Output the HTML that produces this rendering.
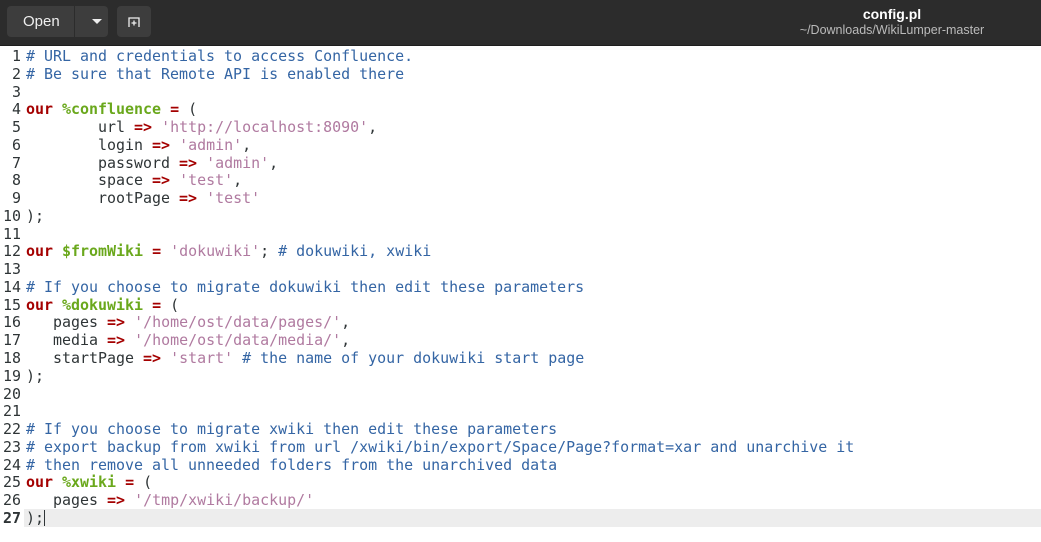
<!DOCTYPE html>
<html><head><meta charset="utf-8"><style>
body{margin:0;width:1041px;height:542px;overflow:hidden;background:#fff;font-family:"Liberation Sans",sans-serif}
.hdr{position:absolute;left:0;top:0;width:1041px;height:45px;background:#2c2c2c;border-bottom:1px solid #1e1e1e}
.btn{position:absolute;top:6px;height:31px;background:#3d3d3d;border-radius:4px;color:#eee;font-size:15px}
.title{position:absolute;left:767px;width:250px;text-align:center;color:#fff}
.ed{position:absolute;left:0;top:48px;font-family:"DejaVu Sans Mono",monospace;font-size:14.96px;line-height:17.77px;color:#2e3436}
.l{height:17.77px;white-space:pre;position:relative}
.n{display:inline-block;width:21px;text-align:right;margin-right:5px;color:#2e3436}
.c{color:#3465a4}.k{color:#a40000;font-weight:bold}.v{color:#6aa81c;font-weight:bold}.s{color:#b07aa0}
.cur{position:absolute;left:24px;top:509px;width:1017px;height:18px;background:#ededed}
</style></head><body>
<div class="hdr">
<div class="btn" style="left:7px;width:101px"><span style="position:absolute;left:16px;top:7px">Open</span><div style="position:absolute;left:67px;top:0;width:1px;height:31px;background:#2c2c2c"></div><div style="position:absolute;left:85px;top:13px;width:0;height:0;border-left:5px solid transparent;border-right:5px solid transparent;border-top:5px solid #eee"></div></div>
<div class="btn" style="left:117px;width:34px"><svg width="34" height="31"><path d="M12 21V12h10v9M14.5 17h5M17 14.5v5" stroke="#eee" stroke-width="1.3" fill="none"/></svg></div>
<div class="title" style="top:6px;font-weight:bold;font-size:14px">config.pl</div>
<div class="title" style="top:23px;font-size:12.5px;color:#bbb">~/Downloads/WikiLumper-master</div>
</div>
<div class="cur"></div>
<div class="ed">
<div class="l"><span class="n">1</span><span class="c"># URL and credentials to access Confluence.</span></div>
<div class="l"><span class="n">2</span><span class="c"># Be sure that Remote API is enabled there</span></div>
<div class="l"><span class="n">3</span></div>
<div class="l"><span class="n">4</span><span class="k">our</span> <span class="v">%confluence</span> <span class="k">=</span> (</div>
<div class="l"><span class="n">5</span>        url <span class="k">=&gt;</span> <span class="s">'http://localhost:8090'</span>,</div>
<div class="l"><span class="n">6</span>        login <span class="k">=&gt;</span> <span class="s">'admin'</span>,</div>
<div class="l"><span class="n">7</span>        password <span class="k">=&gt;</span> <span class="s">'admin'</span>,</div>
<div class="l"><span class="n">8</span>        space <span class="k">=&gt;</span> <span class="s">'test'</span>,</div>
<div class="l"><span class="n">9</span>        rootPage <span class="k">=&gt;</span> <span class="s">'test'</span></div>
<div class="l"><span class="n">10</span>);</div>
<div class="l"><span class="n">11</span></div>
<div class="l"><span class="n">12</span><span class="k">our</span> <span class="v">$fromWiki</span> <span class="k">=</span> <span class="s">'dokuwiki'</span>; <span class="c"># dokuwiki, xwiki</span></div>
<div class="l"><span class="n">13</span></div>
<div class="l"><span class="n">14</span><span class="c"># If you choose to migrate dokuwiki then edit these parameters</span></div>
<div class="l"><span class="n">15</span><span class="k">our</span> <span class="v">%dokuwiki</span> <span class="k">=</span> (</div>
<div class="l"><span class="n">16</span>   pages <span class="k">=&gt;</span> <span class="s">'/home/ost/data/pages/'</span>,</div>
<div class="l"><span class="n">17</span>   media <span class="k">=&gt;</span> <span class="s">'/home/ost/data/media/'</span>,</div>
<div class="l"><span class="n">18</span>   startPage <span class="k">=&gt;</span> <span class="s">'start'</span> <span class="c"># the name of your dokuwiki start page</span></div>
<div class="l"><span class="n">19</span>);</div>
<div class="l"><span class="n">20</span></div>
<div class="l"><span class="n">21</span></div>
<div class="l"><span class="n">22</span><span class="c"># If you choose to migrate xwiki then edit these parameters</span></div>
<div class="l"><span class="n">23</span><span class="c"># export backup from xwiki from url /xwiki/bin/export/Space/Page?format=xar and unarchive it</span></div>
<div class="l"><span class="n">24</span><span class="c"># then remove all unneeded folders from the unarchived data</span></div>
<div class="l"><span class="n">25</span><span class="k">our</span> <span class="v">%xwiki</span> <span class="k">=</span> (</div>
<div class="l"><span class="n">26</span>   pages <span class="k">=&gt;</span> <span class="s">'/tmp/xwiki/backup/'</span></div>
<div class="l"><span class="n" style="font-weight:bold">27</span>);<span style="display:inline-block;width:1px;height:16px;background:#2e3436;vertical-align:middle"></span></div>
</div>
</body></html>
